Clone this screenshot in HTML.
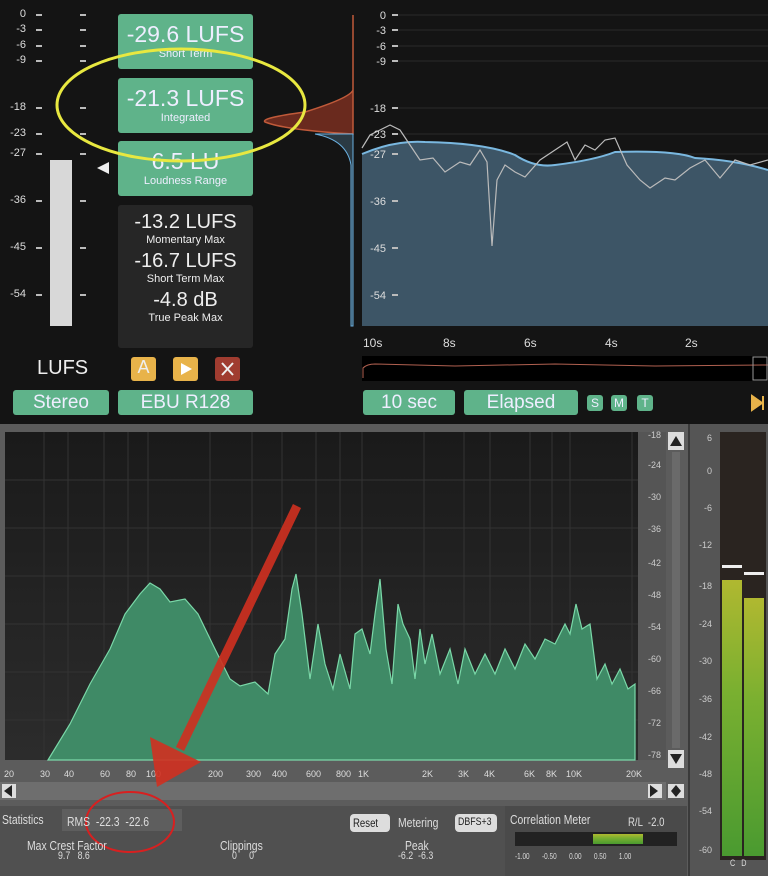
<!DOCTYPE html>
<html><head><meta charset="utf-8"><style>
*{margin:0;padding:0;box-sizing:border-box}
body{width:768px;height:876px;background:#141414;position:relative;overflow:hidden;font-family:"Liberation Sans",sans-serif;color:#eee}
.a{position:absolute}
.g{background:#5fb38a;border-radius:3px;color:#eef;text-align:center}
.lab{font-size:11px;color:#ddd;text-align:right;width:20px}
.s{font-family:"Liberation Sans",sans-serif;font-size:11px;color:#ddd;transform:scaleX(.8);transform-origin:left}
</style></head><body>
<div class="a lab" style="left:6px;top:8px">0</div><div class="a lab" style="left:6px;top:23px">-3</div><div class="a lab" style="left:6px;top:39px">-6</div><div class="a lab" style="left:6px;top:54px">-9</div><div class="a lab" style="left:6px;top:101px">-18</div><div class="a lab" style="left:6px;top:127px">-23</div><div class="a lab" style="left:6px;top:147px">-27</div><div class="a lab" style="left:6px;top:194px">-36</div><div class="a lab" style="left:6px;top:241px">-45</div><div class="a lab" style="left:6px;top:288px">-54</div>
<svg class="a" style="left:0;top:0" width="120" height="340"><g stroke="#bbb" stroke-width="2">
<path d="M36 15h6M80 15h6M36 30h6M80 30h6M36 46h6M80 46h6M36 61h6M80 61h6M36 108h6M80 108h6M36 134h6M80 134h6M36 154h6M80 154h6M36 201h6M80 201h6M36 248h6M80 248h6M36 295h6M80 295h6"/></g>
<rect x="50" y="160" width="22" height="166" fill="#d8d8d8"/><path d="M97 168l12-6v12z" fill="#eee"/></svg>
<div class="a g" style="left:118px;top:14px;width:135px;height:55px"><div style="font-size:23px;margin-top:7px">-29.6 LUFS</div><div style="font-size:11px">Short Term</div></div>
<div class="a g" style="left:118px;top:78px;width:135px;height:55px"><div style="font-size:23px;margin-top:7px">-21.3 LUFS</div><div style="font-size:11px">Integrated</div></div>
<div class="a g" style="left:118px;top:141px;width:135px;height:55px"><div style="font-size:23px;margin-top:7px">6.5 LU</div><div style="font-size:11px">Loudness Range</div></div>
<div class="a" style="left:118px;top:205px;width:135px;height:143px;background:#262626;border-radius:3px;text-align:center">
<div style="font-size:20px;margin-top:6px">-13.2 LUFS</div><div style="font-size:11px">Momentary Max</div>
<div style="font-size:20px;margin-top:4px">-16.7 LUFS</div><div style="font-size:11px">Short Term Max</div>
<div style="font-size:20px;margin-top:4px">-4.8 dB</div><div style="font-size:11px">True Peak Max</div></div>
<div class="a" style="left:37px;top:357px;font-size:20px">LUFS</div>
<div class="a" style="left:131px;top:357px;width:25px;height:24px;background:#e8b34a;border-radius:3px;text-align:center;font-size:18px">A</div>
<div class="a" style="left:173px;top:357px;width:25px;height:24px;background:#e8b34a;border-radius:3px"><svg width="25" height="24"><path d="M8 6l11 6-11 6z" fill="#fff"/></svg></div>
<div class="a" style="left:215px;top:357px;width:25px;height:24px;background:#a03c30;border-radius:3px"><svg width="25" height="24"><path d="M7 6l11 12M18 6L7 18" stroke="#eee" stroke-width="2"/></svg></div>
<div class="a g" style="left:13px;top:390px;width:96px;height:25px;font-size:19px;line-height:25px">Stereo</div>
<div class="a g" style="left:118px;top:390px;width:135px;height:25px;font-size:19px;line-height:25px">EBU R128</div>
<svg class="a" style="left:255px;top:0" width="513" height="420">
<path d="M98 15V90Q95 98 50 112Q5 118 10 122Q30 130 98 134Z" fill="#6a2a1e" stroke="#c05a3a" stroke-width="1.5"/>
<path d="M98 134H60Q92 140 96 165V326H98Z" fill="#2a3a44" stroke="#6ab0e0" stroke-width="1"/>
<g stroke="#2a2a2a"><path d="M143 15H513M143 30H513M143 46H513M143 61H513M143 108H513M143 134H513M143 154H513M143 201H513M143 248H513M143 295H513"/></g>
<path d="M107 154Q140 140 170 142Q230 143 260 155Q280 168 300 165Q340 160 360 152Q420 150 440 158Q480 160 513 170V326H107Z" fill="#3d5566"/>
<path d="M107 154Q140 140 170 142Q230 143 260 155Q280 168 300 165Q340 160 360 152Q420 150 440 158Q480 160 513 170" fill="none" stroke="#7ab8e0" stroke-width="2"/>
<path d="M107 148L115 135 125 130 135 125 145 130 155 145 165 160 178 158 190 172 205 162 215 165 225 150 232 162 237 246 242 180 250 165 260 172 270 177 285 160 300 150 312 142 320 160 330 145 340 150 350 140 360 138 372 165 385 180 395 188 410 178 420 180 435 168 450 160 465 178 480 160 495 165 513 160" fill="none" stroke="#bbb" stroke-width="1.2"/>
<g stroke="#bbb" stroke-width="2"><path d="M137 15h6M137 30h6M137 46h6M137 61h6M137 108h6M137 134h6M137 154h6M137 201h6M137 248h6M137 295h6"/></g>
<g font-size="11" fill="#ddd" text-anchor="end" font-family="Liberation Sans"><text x="131" y="19">0</text><text x="131" y="34">-3</text><text x="131" y="50">-6</text><text x="131" y="65">-9</text><text x="131" y="112">-18</text><text x="131" y="138">-23</text><text x="131" y="158">-27</text><text x="131" y="205">-36</text><text x="131" y="252">-45</text><text x="131" y="299">-54</text></g>
<g font-size="12" fill="#ddd" font-family="Liberation Sans"><text x="108" y="347">10s</text><text x="188" y="347">8s</text><text x="269" y="347">6s</text><text x="350" y="347">4s</text><text x="430" y="347">2s</text></g>
<rect x="107" y="356" width="406" height="25" fill="#000"/>
<path d="M108 378V368Q112 364 120 364L200 366 300 364 400 366 513 365" fill="none" stroke="#b06050" stroke-width="1"/>
<rect x="498" y="357" width="14" height="23" fill="none" stroke="#999"/>
<path d="M497 396l10 7-10 7z M508 396v14" fill="#e8b34a" stroke="#e8b34a" stroke-width="2"/>
</svg>
<div class="a g" style="left:363px;top:390px;width:92px;height:25px;font-size:19px;line-height:25px">10 sec</div>
<div class="a g" style="left:464px;top:390px;width:114px;height:25px;font-size:19px;line-height:25px">Elapsed</div>
<div class="a g" style="left:587px;top:395px;width:16px;height:16px;font-size:12px;line-height:16px">S</div>
<div class="a g" style="left:611px;top:395px;width:16px;height:16px;font-size:12px;line-height:16px">M</div>
<div class="a g" style="left:637px;top:395px;width:16px;height:16px;font-size:12px;line-height:16px">T</div>
<div class="a" style="left:0;top:424px;width:768px;height:452px;background:#5c5c5c"></div>
<div class="a" style="left:688px;top:424px;width:80px;height:452px;background:#555;border-left:2px solid #3a3a3a"></div>
<svg class="a" style="left:0;top:424px" width="768" height="452">
<defs><linearGradient id="bg" x1="0" y1="0" x2="0" y2="1"><stop offset="0" stop-color="#1a1a1a"/><stop offset="1" stop-color="#2c2c2c"/></linearGradient>
<linearGradient id="mg" x1="0" y1="0" x2="0" y2="1"><stop offset="0" stop-color="#b0b830"/><stop offset=".4" stop-color="#7ab030"/><stop offset="1" stop-color="#4a9a30"/></linearGradient></defs>
<rect x="5" y="8" width="633" height="328" fill="url(#bg)"/>
<g stroke="#333" stroke-width="1"><path d="M5 56H638M5 104H638M5 152H638M5 200H638M5 248H638M5 296H638M44 8V336M68 8V336M104 8V336M128 8V336M148 8V336M210 8V336M252 8V336M282 8V336M316 8V336M340 8V336M362 8V336M424 8V336M464 8V336M490 8V336M530 8V336M552 8V336M570 8V336M632 8V336"/></g>
<path d="M48 336L70 300 90 260 110 225 125 190 140 170 150 159 160 165 170 178 185 175 198 190 215 225 230 255 240 262 255 258 268 270 275 230 285 215 292 165 296 150 302 190 310 255 318 200 325 240 333 265 340 230 350 265 355 210 362 205 370 230 375 190 380 155 386 225 392 260 398 180 403 200 410 215 415 255 420 205 425 240 432 210 440 250 450 225 458 260 465 225 475 250 485 230 495 250 505 225 515 245 525 220 535 235 545 215 555 220 565 200 570 210 576 180 582 205 590 200 597 255 605 240 612 260 620 245 628 265 635 260 635 336Z" fill="#3f8a66" stroke="#7ad8a8" stroke-width="1.2"/>
<rect x="638" y="8" width="28" height="328" fill="#555"/>
<g font-size="9" fill="#ccc" font-family="Liberation Sans"><text x="648" y="14">-18</text><text x="648" y="44">-24</text><text x="648" y="76">-30</text><text x="648" y="108">-36</text><text x="648" y="142">-42</text><text x="648" y="174">-48</text><text x="648" y="206">-54</text><text x="648" y="238">-60</text><text x="648" y="270">-66</text><text x="648" y="302">-72</text><text x="648" y="334">-78</text></g>
<rect x="668" y="8" width="16" height="18" fill="#ddd"/><path d="M670 22l6-10 6 10z" fill="#222"/>
<rect x="668" y="326" width="16" height="18" fill="#ddd"/><path d="M670 330l6 10 6-10z" fill="#222"/>
<rect x="672" y="28" width="8" height="296" fill="#6a6a6a"/>
<g font-size="9" fill="#ddd" font-family="Liberation Sans"><text x="4" y="353">20</text><text x="40" y="353">30</text><text x="64" y="353">40</text><text x="100" y="353">60</text><text x="126" y="353">80</text><text x="146" y="353">100</text><text x="208" y="353">200</text><text x="246" y="353">300</text><text x="272" y="353">400</text><text x="306" y="353">600</text><text x="336" y="353">800</text><text x="358" y="353">1K</text><text x="422" y="353">2K</text><text x="458" y="353">3K</text><text x="484" y="353">4K</text><text x="524" y="353">6K</text><text x="546" y="353">8K</text><text x="566" y="353">10K</text><text x="626" y="353">20K</text></g>
<rect x="0" y="358" width="666" height="18" fill="#6e6e6e"/>
<rect x="2" y="360" width="14" height="14" fill="#ddd"/><path d="M4 367l8-6v12z" fill="#222"/>
<rect x="648" y="360" width="14" height="14" fill="#ddd"/><path d="M658 367l-8-6v12z" fill="#222"/>
<rect x="668" y="360" width="16" height="14" fill="#ddd"/><path d="M676 361l5 6-5 6-5-6z" fill="#222"/>
<rect x="0" y="382" width="505" height="70" fill="#505050"/>
<rect x="62" y="385" width="120" height="22" fill="#5e5e5e"/>
<rect x="505" y="382" width="182" height="70" fill="#4a4a4a"/>
<rect x="515" y="408" width="162" height="14" fill="#222"/><rect x="593" y="410" width="50" height="10" fill="url(#mg)"/>
<rect x="350" y="390" width="40" height="18" rx="4" fill="#ddd"/><rect x="455" y="390" width="42" height="18" rx="4" fill="#ddd"/>
<rect x="720" y="8" width="46" height="428" fill="#2a2420"/>
<rect x="722" y="156" width="20" height="276" fill="url(#mg)"/><rect x="744" y="174" width="20" height="258" fill="url(#mg)"/>
<rect x="722" y="141" width="20" height="3" fill="#eee"/><rect x="744" y="148" width="20" height="3" fill="#eee"/>
<g font-size="9" fill="#ccc" font-family="Liberation Sans" text-anchor="end"><text x="712" y="17">6</text><text x="712" y="50">0</text><text x="712" y="87">-6</text><text x="712" y="124">-12</text><text x="712" y="165">-18</text><text x="712" y="203">-24</text><text x="712" y="240">-30</text><text x="712" y="278">-36</text><text x="712" y="316">-42</text><text x="712" y="353">-48</text><text x="712" y="390">-54</text><text x="712" y="429">-60</text></g>
<path d="M297 82L180 325" stroke="#d03020" stroke-width="9" opacity=".9"/>
<path d="M150 313L201 338 157 363Z" fill="#d03020" opacity=".9"/>
<ellipse cx="130" cy="398" rx="44" ry="30" fill="none" stroke="#d82020" stroke-width="2"/>
</svg>
<div class="a s" style="left:2px;top:812px;font-size:13px">Statistics</div>
<div class="a s" style="left:67px;top:814px;font-size:13px">RMS &nbsp;-22.3 &nbsp;-22.6</div>
<div class="a s" style="left:353px;top:816px;font-size:12px;color:#222">Reset</div>
<div class="a s" style="left:398px;top:815px;font-size:13px">Metering</div>
<div class="a s" style="left:458px;top:816px;font-size:11px;color:#222">DBFS+3</div>
<div class="a s" style="left:510px;top:812px;font-size:13px">Correlation Meter</div>
<div class="a s" style="left:628px;top:815px;font-size:12px">R/L &nbsp;-2.0</div>
<div class="a s" style="left:27px;top:838px;font-size:13px">Max Crest Factor</div>
<div class="a s" style="left:58px;top:850px">9.7 &nbsp; 8.6</div>
<div class="a s" style="left:220px;top:838px;font-size:13px">Clippings</div>
<div class="a s" style="left:232px;top:850px">0 &nbsp; &nbsp; 0</div>
<div class="a s" style="left:405px;top:838px;font-size:13px">Peak</div>
<div class="a s" style="left:398px;top:850px">-6.2 &nbsp;-6.3</div>
<div class="a s" style="left:515px;top:852px;font-size:8px">-1.00 &nbsp; &nbsp; &nbsp; -0.50 &nbsp; &nbsp; &nbsp; 0.00 &nbsp; &nbsp; &nbsp; 0.50 &nbsp; &nbsp; &nbsp; 1.00</div>
<div class="a s" style="left:730px;top:858px;font-size:9px">C &nbsp; D</div>
<svg class="a" style="left:0;top:0" width="400" height="200"><ellipse cx="181" cy="105" rx="124" ry="56" fill="none" stroke="#e8e840" stroke-width="3"/></svg>
</body></html>
